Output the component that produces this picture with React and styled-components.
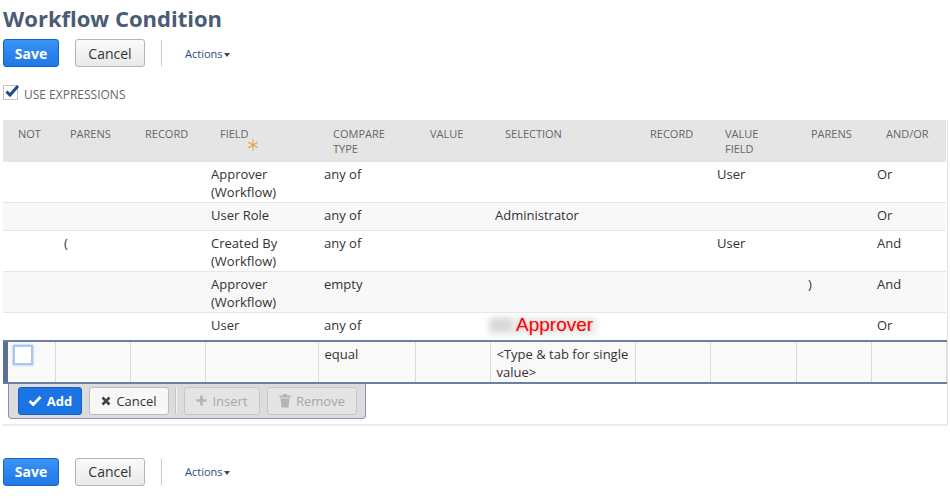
import React from "react";
import styled, { createGlobalStyle } from "styled-components";

const Global = createGlobalStyle`
  html, body { margin: 0; padding: 0; background: #fff; }
  body { font-family: "Open Sans", "Liberation Sans", sans-serif; color: #333; }
  * { box-sizing: border-box; }
`;

const Page = styled.div`
  padding: 3px 0 0 3px;
  width: 950px;
`;

const Title = styled.h1`
  margin: 0;
  font-size: 22px;
  line-height: 30px;
  font-weight: 700;
  color: #4a5b75;
`;

const Toolbar = styled.div`
  display: flex;
  align-items: center;
  height: 28px;
  margin-top: ${(p) => p.$mt || 0}px;
`;

const PrimaryButton = styled.button`
  height: 28px;
  width: ${(p) => p.$w}px;
  border: 1px solid #1565c0;
  border-radius: 3px;
  background: linear-gradient(#3a93f5, #1f78e6);
  color: #fff;
  font-family: inherit;
  font-size: 14px;
  font-weight: 700;
  padding: 0;
`;

const SecondaryButton = styled.button`
  height: 28px;
  width: ${(p) => p.$w}px;
  margin-left: 16px;
  border: 1px solid #b5b5b5;
  border-radius: 3px;
  background: linear-gradient(#fafafa, #e9e9e9);
  color: #333;
  font-family: inherit;
  font-size: 14px;
  padding: 0;
`;

const Divider = styled.div`
  width: 1px;
  height: 26px;
  background: #c8c8c8;
  margin-left: 16px;
`;

const ActionsLink = styled.span`
  margin-left: 23px;
  font-size: 11px;
  color: #2b4a7e;
  display: flex;
  align-items: center;
  gap: 1px;
`;

const Caret = styled.span`
  display: inline-block;
  width: 0;
  height: 0;
  margin-top: 3px;
  border-left: 3px solid transparent;
  border-right: 3px solid transparent;
  border-top: 4px solid #444;
`;

const ExprRow = styled.div`
  display: flex;
  align-items: center;
  margin-top: 16px;
  height: 18px;
`;

const CheckBox = styled.div`
  position: relative;
  width: 15px;
  height: 15px;
  border: 1px solid #c4c4c4;
  background: #fff;
  svg { position: absolute; left: 1px; top: -2px; }
`;

const ExprLabel = styled.span`
  margin-left: 6px;
  font-size: 12px;
  color: #666;
  margin-top: 4px;
`;

const Panel = styled.div`
  margin-top: 19px;
  width: 945px;
  border-right: 1px solid #e2e2e2;
  border-bottom: 2px solid #ececec;
  padding-bottom: 5px;
`;

const Table = styled.table`
  border-collapse: collapse;
  table-layout: fixed;
  width: 943px;
`;

const HeadCell = styled.th`
  background: #e5e5e5;
  font-size: 11px;
  font-weight: 400;
  color: #666;
  text-align: left;
  vertical-align: top;
  padding: 6px 4px 0 15px;
  height: 42px;
  line-height: 15px;
  position: relative;
`;

const Required = styled.svg`
  position: absolute;
  left: 42px;
  top: 19px;
`;

const BodyRow = styled.tr`
  background: ${(p) => (p.$alt ? "#f8f8f8" : "#fff")};
  border-bottom: 1px solid #e6e6e6;
`;

const Cell = styled.td`
  font-size: 13px;
  line-height: 18px;
  color: #333;
  vertical-align: top;
  padding: 3px 4px 1px ${(p) => p.$pl || 6}px;
  height: 28px;
`;

const EditRowEl = styled.tr`
  background: #f9f9f9;
  border-top: 2px solid #6b7fa3;
  border-bottom: 2px solid #6b7fa3;
`;

const EditCell = styled.td`
  font-size: 13px;
  line-height: 18px;
  color: #333;
  vertical-align: top;
  padding: 3px 4px 1px 6px;
  height: 42px;
  border-left: 1px solid #dcdcdc;
  &:first-child {
    border-left: none;
    box-shadow: inset 5px 0 0 #5b6e93;
    padding-left: 10px;
  }
  &:last-child {
    border-right: 1px solid #dcdcdc;
  }
`;

const EditCheck = styled.div`
  width: 20px;
  height: 20px;
  border: 2px solid #a9c8ef;
  background: #fff;
  box-shadow: 0 0 2px #7eaee8;
`;

const Redacted = styled.span`
  display: inline-flex;
  align-items: center;
  margin-left: -4px;
  position: relative;
`;

const Smudge = styled.span`
  position: absolute;
  left: -2px;
  right: -4px;
  top: 1px;
  bottom: -1px;
  background: #ececec;
  filter: blur(3px);
`;

const SmudgeDark = styled.span`
  display: inline-block;
  width: 20px;
  height: 12px;
  background: #d6d6d6;
  filter: blur(3px);
  margin-right: 5px;
  position: relative;
`;

const RedText = styled.span`
  position: relative;
  font-family: "Liberation Sans", Arial, sans-serif;
  font-size: 19px;
  color: #ff0000;
  text-shadow: 0 0 3px rgba(0, 0, 0, 0.2);
  line-height: 18px;
`;

const ButtonBar = styled.div`
  margin-left: 5px;
  width: 358px;
  height: 35px;
  background: #dcdcdc;
  border: 1px solid #8495b4;
  border-top: none;
  border-radius: 0 0 4px 4px;
  display: flex;
  align-items: center;
  padding: 0 0 0 9px;
  gap: 7px;
`;

const BarButton = styled.button`
  height: 28px;
  width: ${(p) => p.$w}px;
  border-radius: 3px;
  font-family: inherit;
  font-size: 13px;
  display: flex;
  align-items: center;
  justify-content: center;
  gap: 5px;
  padding: 0;
  border: 1px solid ${(p) => (p.$kind === "primary" ? "#1460c4" : p.$kind === "disabled" ? "#c6c6c6" : "#bdbdbd")};
  background: ${(p) => (p.$kind === "primary" ? "#1b74e4" : p.$kind === "disabled" ? "#e4e4e4" : "#f7f7f7")};
  color: ${(p) => (p.$kind === "primary" ? "#fff" : p.$kind === "disabled" ? "#a8a8a8" : "#333")};
  font-weight: ${(p) => (p.$kind === "primary" ? 700 : 400)};
`;

const BarSep = styled.div`
  width: 1px;
  height: 26px;
  background: #f4f4f4;
  box-shadow: -1px 0 0 #c4c4c4;
`;

const Footer = styled(Toolbar)`
  margin-top: 32px;
`;

const cols = [52, 75, 75, 113, 97, 75, 145, 75, 86, 75, 75];
const headers = ["NOT", "PARENS", "RECORD", "FIELD", "COMPARE TYPE", "VALUE", "SELECTION", "RECORD", "VALUE FIELD", "PARENS", "AND/OR"];

const rows = [
  { field: ["Approver", "(Workflow)"], cmp: "any of", vf: "User", ao: "Or" },
  { field: ["User Role"], cmp: "any of", sel: "Administrator", ao: "Or", alt: true },
  { field: ["Created By", "(Workflow)"], cmp: "any of", vf: "User", ao: "And", lp: "(" },
  { field: ["Approver", "(Workflow)"], cmp: "empty", ao: "And", rp: ")", alt: true },
  { field: ["User"], cmp: "any of", red: true, ao: "Or" },
];

const Lines = ({ items }) =>
  items.map((t, i) => (
    <React.Fragment key={i}>
      {i > 0 && <br />}
      {t}
    </React.Fragment>
  ));

function TopBar({ mt, Comp = Toolbar }) {
  return (
    <Comp $mt={mt}>
      <PrimaryButton $w={56}>Save</PrimaryButton>
      <SecondaryButton $w={70}>Cancel</SecondaryButton>
      <Divider />
      <ActionsLink>
        Actions<Caret />
      </ActionsLink>
    </Comp>
  );
}

export default function App() {
  return (
    <Page>
      <Global />
      <Title>Workflow Condition</Title>
      <TopBar mt={6} />
      <ExprRow>
        <CheckBox>
          <svg width="15" height="14" viewBox="0 0 15 14">
            <path d="M1.5 7.5 L5 11 L13 2" fill="none" stroke="#1d4b8c" strokeWidth="3" />
          </svg>
        </CheckBox>
        <ExprLabel>USE EXPRESSIONS</ExprLabel>
      </ExprRow>
      <Panel>
        <Table>
          <colgroup>
            {cols.map((w, i) => (
              <col key={i} style={{ width: w }} />
            ))}
          </colgroup>
          <thead>
            <tr>
              {headers.map((h, i) => (
                <HeadCell key={i}>
                  {h === "COMPARE TYPE" ? (
                    <>COMPARE<br />TYPE</>
                  ) : h === "VALUE FIELD" ? (
                    <>VALUE<br />FIELD</>
                  ) : (
                    h
                  )}
                  {h === "FIELD" && (
                    <Required width="12" height="12" viewBox="0 0 12 12">
                      <path d="M6 0.5 V11.5 M1.2 3.25 L10.8 8.75 M1.2 8.75 L10.8 3.25" stroke="#e3a13a" strokeWidth="1.1" />
                    </Required>
                  )}
                </HeadCell>
              ))}
            </tr>
          </thead>
          <tbody>
            {rows.map((r, i) => (
              <BodyRow key={i} $alt={r.alt}>
                <Cell />
                <Cell $pl={9}>{r.lp}</Cell>
                <Cell />
                <Cell>
                  <Lines items={r.field} />
                </Cell>
                <Cell>{r.cmp}</Cell>
                <Cell />
                <Cell $pl={5}>
                  {r.sel}
                  {r.red && (
                    <Redacted>
                      <Smudge />
                      <SmudgeDark />
                      <RedText>Approver</RedText>
                    </Redacted>
                  )}
                </Cell>
                <Cell />
                <Cell $pl={7}>{r.vf}</Cell>
                <Cell $pl={12}>{r.rp}</Cell>
                <Cell>{r.ao}</Cell>
              </BodyRow>
            ))}
            <EditRowEl>
              <EditCell>
                <EditCheck />
              </EditCell>
              <EditCell />
              <EditCell />
              <EditCell />
              <EditCell>equal</EditCell>
              <EditCell />
              <EditCell>
                &lt;Type &amp; tab for single
                <br />
                value&gt;
              </EditCell>
              <EditCell />
              <EditCell />
              <EditCell />
              <EditCell />
            </EditRowEl>
          </tbody>
        </Table>
        <ButtonBar>
          <BarButton $kind="primary" $w={64}>
            <svg width="14" height="12" viewBox="0 0 14 12">
              <path d="M1.5 6 L5.2 9.5 L12.5 2" fill="none" stroke="#fff" strokeWidth="2.8" />
            </svg>
            Add
          </BarButton>
          <BarButton $w={80}>
            <svg width="10" height="10" viewBox="0 0 10 10">
              <path d="M1.5 1.5 L8.5 8.5 M8.5 1.5 L1.5 8.5" stroke="#444" strokeWidth="2.6" />
            </svg>
            Cancel
          </BarButton>
          <BarSep />
          <BarButton $kind="disabled" $w={76}>
            <svg width="11" height="11" viewBox="0 0 11 11">
              <path d="M5.5 0.5 V10.5 M0.5 5.5 H10.5" stroke="#b4b4b4" strokeWidth="2.6" />
            </svg>
            Insert
          </BarButton>
          <BarButton $kind="disabled" $w={90}>
            <svg width="12" height="14" viewBox="0 0 12 14">
              <rect x="0.5" y="1.5" width="11" height="2" fill="#b4b4b4" />
              <rect x="4" y="0" width="4" height="2" fill="#b4b4b4" />
              <path d="M1.5 4.5 H10.5 L9.5 13.5 H2.5 Z" fill="#b4b4b4" />
            </svg>
            Remove
          </BarButton>
        </ButtonBar>
      </Panel>
      <TopBar Comp={Footer} />
    </Page>
  );
}
